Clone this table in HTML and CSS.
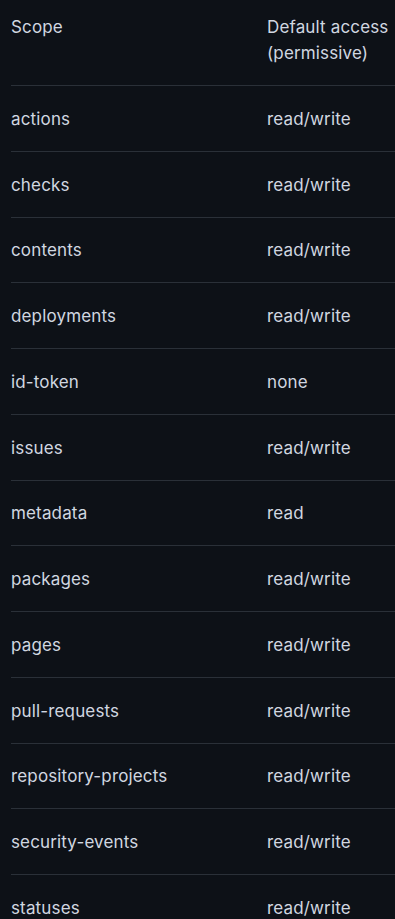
FILE: index.html
```html
<!DOCTYPE html>
<html>
<head>
<meta charset="utf-8">
<link rel="stylesheet" href="styles.css">
</head>
<body>
<table class="perm-table">
  <thead>
    <tr>
      <th class="col-scope">Scope</th>
      <th class="col-access">Default access<br>(permissive)</th>
    </tr>
  </thead>
  <tbody>
    <tr><td>actions</td><td>read/write</td></tr>
    <tr><td>checks</td><td>read/write</td></tr>
    <tr><td>contents</td><td>read/write</td></tr>
    <tr><td>deployments</td><td>read/write</td></tr>
    <tr><td>id-token</td><td>none</td></tr>
    <tr><td>issues</td><td>read/write</td></tr>
    <tr><td>metadata</td><td>read</td></tr>
    <tr><td>packages</td><td>read/write</td></tr>
    <tr><td>pages</td><td>read/write</td></tr>
    <tr><td>pull-requests</td><td>read/write</td></tr>
    <tr><td>repository-projects</td><td>read/write</td></tr>
    <tr><td>security-events</td><td>read/write</td></tr>
    <tr><td>statuses</td><td>read/write</td></tr>
  </tbody>
</table>
</body>
</html>
```

FILE: styles.css
```css
html, body {
  margin: 0;
  padding: 0;
  background: #0d1117;
}
body {
  padding-left: 11px;
  font-family: Inter, "Noto Sans", sans-serif;
  font-size: 17px;
  letter-spacing: 0.15px;
  color: #d1d7e0;
  overflow: hidden;
}
.perm-table {
  border-collapse: collapse;
  width: 384px;
}
.perm-table th {
  font-weight: 400;
  text-align: left;
  vertical-align: top;
  line-height: 26px;
  padding: 14px 0 19px 0;
  border-bottom: 1px solid #2a3038;
  white-space: nowrap;
}
.perm-table .col-scope {
  width: 256px;
}
.perm-table td {
  height: 63.75px;
  padding: 1px 0 0 0;
  line-height: 24px;
  vertical-align: middle;
  border-bottom: 1px solid #2a3038;
}
```
